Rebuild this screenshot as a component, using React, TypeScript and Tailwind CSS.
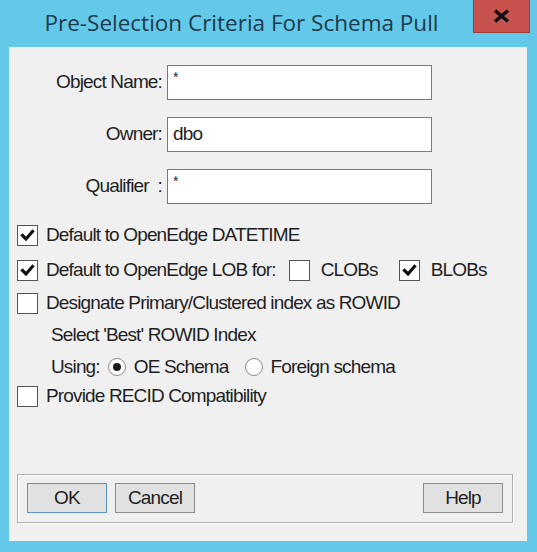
import type { ReactNode } from 'react';

const FONT = "font-['Liberation_Sans',Arial,sans-serif] text-[19px] tracking-[-0.85px] text-[#1f1f1f]";

function Check({ checked }: { checked: boolean }) {
  return (
    <span className="flex h-[21px] w-[21px] shrink-0 items-center justify-center border border-[#555] bg-white">
      {checked && (
        <svg width="15" height="15" viewBox="0 0 15 15">
          <path d="M2.5 7.5 L6 11 L12.5 3.5" fill="none" stroke="#111" strokeWidth="3.2" strokeLinecap="square" />
        </svg>
      )}
    </span>
  );
}

function Radio({ checked }: { checked: boolean }) {
  return (
    <span className="flex h-[18px] w-[18px] shrink-0 items-center justify-center rounded-full border border-[#8a8a8a] bg-white">
      {checked && <span className="h-[8px] w-[8px] rounded-full bg-[#1a1a1a]" />}
    </span>
  );
}

function CheckRow({ checked, h, children }: { checked: boolean; h: string; children: ReactNode }) {
  return (
    <div className={`flex items-center gap-[8px] pl-[8px] ${h}`}>
      <Check checked={checked} />
      {children}
    </div>
  );
}

function Field({ label, value }: { label: string; value: string }) {
  return (
    <>
      <span className="self-center text-right">{label}</span>
      <div className="flex h-[35px] items-center border border-[#7a7a7a] bg-white px-[5px]">
        {value === '*' ? <span className="-mt-[10px] text-[14px]">*</span> : value}
      </div>
    </>
  );
}

function Button({ label, primary }: { label: string; primary?: boolean }) {
  return (
    <button
      type="button"
      className={`flex h-[30px] w-[80px] items-center justify-center border bg-[#e1e1e1] ${
        primary ? 'border-[#5d93c4]' : 'border-[#8c8c8c]'
      }`}
    >
      {label}
    </button>
  );
}

export default function App() {
  return (
    <div className={`flex h-[552px] w-[537px] flex-col bg-[#64c8e8] ${FONT}`}>
      <div className="flex h-[47px] items-start">
        <div className="flex h-[45px] flex-1 items-center justify-center pl-[10px] font-['Open_Sans',sans-serif] text-[22.5px] tracking-normal text-[#1c3a4d]">
          Pre-Selection Criteria For Schema Pull
        </div>
        <div className="mr-[7px] flex h-[33px] w-[57px] items-center justify-center border border-t-0 border-[#9a3e3a] bg-[#c8534e]">
          <svg width="17" height="14" viewBox="0 0 17 14">
            <path d="M2 1.5 L15 12.5 M15 1.5 L2 12.5" stroke="#111" strokeWidth="3.6" />
          </svg>
        </div>
      </div>

      <div className="ml-[9px] mr-[10px] flex h-[494px] flex-col bg-[#f0f0f0]">
        <div className="grid grid-cols-[153px_265px] gap-x-[5px] gap-y-[17px] pt-[18px]">
          <Field label="Object Name:" value="*" />
          <Field label="Owner:" value="dbo" />
          <Field label={'Qualifier\u00a0\u00a0:'} value="*" />
        </div>

        <div className="mt-[13.5px] flex flex-col">
          <CheckRow checked h="h-[35px]">
            Default to OpenEdge DATETIME
          </CheckRow>
          <CheckRow checked h="h-[35px]">
            <span>Default to OpenEdge LOB for:</span>
            <span className="ml-[5px] flex items-center gap-[11px]">
              <Check checked={false} />
              CLOBs
            </span>
            <span className="ml-[13px] flex items-center gap-[11px]">
              <Check checked />
              BLOBs
            </span>
          </CheckRow>
          <CheckRow checked={false} h="h-[32px]">
            Designate Primary/Clustered index as ROWID
          </CheckRow>
          <div className="flex h-[32px] items-center pl-[42px]">Select 'Best' ROWID Index</div>
          <div className="flex h-[31px] items-center gap-[8px] pl-[42px]">
            <span>Using:</span>
            <span className="flex items-center gap-[8px]">
              <Radio checked />
              OE Schema
            </span>
            <span className="ml-[8px] flex items-center gap-[8px]">
              <Radio checked={false} />
              Foreign schema
            </span>
          </div>
          <CheckRow checked={false} h="h-[28px]">
            Provide RECID Compatibility
          </CheckRow>
        </div>

        <div className="flex-1" />

        <div className="mb-[18px] ml-[8px] mr-[14px] flex h-[49px] items-start justify-between border border-[#b0b0b0] px-[9px] pt-[8px] shadow-[inset_1px_1px_0_#fff,1px_1px_0_#fff]">
          <div className="flex gap-[8px]">
            <Button label="OK" primary />
            <Button label="Cancel" />
          </div>
          <Button label="Help" />
        </div>
      </div>
    </div>
  );
}
